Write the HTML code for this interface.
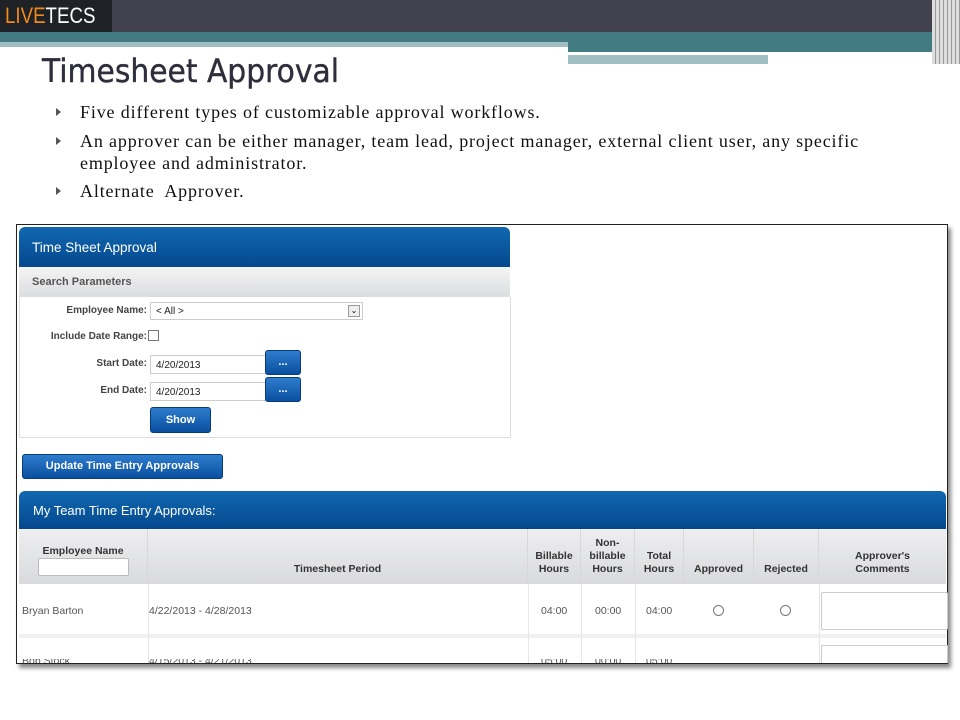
<!DOCTYPE html>
<html><head><meta charset="utf-8"><style>
*{margin:0;padding:0;box-sizing:border-box}
body{width:960px;height:720px;background:#fff;position:relative;overflow:hidden;font-family:"Liberation Sans",sans-serif}
.a{position:absolute}
.bul{font-family:"Liberation Serif",serif;font-size:18px;letter-spacing:0.85px;color:#111;line-height:22px}
.tri{position:absolute;left:56px;width:0;height:0;border-left:5px solid #555;border-top:4px solid transparent;border-bottom:4px solid transparent}
.lab{position:absolute;font-size:10px;font-weight:bold;color:#444;text-align:right}
.inp{position:absolute;border:1px solid #ccc;background:#fff;font-size:10px;color:#222;padding:4px 5px}
.btn{position:absolute;background:linear-gradient(#2e7ccc,#0a4fa0);border:1px solid #073c7c;border-radius:3px;color:#fff;font-size:11px;font-weight:bold;text-align:center}
.th{position:absolute;top:529px;height:55px;font-size:10.5px;font-weight:bold;color:#333;text-align:center;line-height:13px;border-right:1px solid #d8d8d8;display:flex;align-items:flex-end;justify-content:center;padding-bottom:8px}
.td{position:absolute;font-size:10.5px;color:#555}
.rad{position:absolute;width:11px;height:11px;border:1px solid #777;border-radius:50%}
</style></head><body>
<div class="a" style="left:0;top:0;width:960px;height:32px;background:#42424f"></div>
<div class="a" style="left:0;top:0;width:112px;height:32px;background:#1e2226"></div>
<div class="a" style="left:5px;top:3px;font-size:22px;color:#fff;transform:scaleX(0.85);transform-origin:left"><span style="color:#f08a1c">LIVE</span>TECS</div>
<div class="a" style="left:0;top:32px;width:960px;height:15px;background:#427c82"></div>
<div class="a" style="left:0;top:42px;width:568px;height:5px;background:#a0bfc2"></div>
<div class="a" style="left:568px;top:47px;width:392px;height:19px;background:#fff"></div>
<div class="a" style="left:568px;top:42px;width:370px;height:10px;background:#427c82"></div>
<div class="a" style="left:568px;top:55px;width:200px;height:9px;background:#a0bfc2"></div>
<div class="a" style="left:932px;top:0;width:28px;height:64px;background:repeating-linear-gradient(90deg,#ddd 0 3px,#999 3px 4px)"></div>
<div class="a" style="left:42px;top:52px;font-size:32px;color:#2e2e3c;font-family:'DejaVu Sans',sans-serif;transform:scaleX(0.93);transform-origin:left;-webkit-text-stroke:0.4px #2e2e3c">Timesheet Approval</div>
<div class="tri" style="top:108px"></div>
<div class="a bul" style="left:80px;top:101px">Five different types of customizable approval workflows.</div>
<div class="tri" style="top:137px"></div>
<div class="a bul" style="left:80px;top:130px;width:830px">An approver can be either manager, team lead, project manager, external client user, any specific employee and administrator.</div>
<div class="tri" style="top:187px"></div>
<div class="a bul" style="left:80px;top:180px">Alternate&nbsp; Approver.</div>

<div class="a" style="left:16px;top:224px;width:932px;height:440px;border:1px solid #222;box-shadow:3px 4px 4px #888;background:#fff;overflow:hidden"></div>
<div class="a" style="left:19px;top:227px;width:491px;height:40px;background:linear-gradient(#1168b0,#04488e);border-radius:6px 6px 0 0;color:#fff;font-size:13.5px;padding:13px 0 0 13px">Time Sheet Approval</div>
<div class="a" style="left:19px;top:267px;width:491px;height:30px;background:linear-gradient(#f4f4f4,#dcdde0);font-size:11px;font-weight:bold;color:#555;padding:9px 0 0 13px">Search Parameters</div>
<div class="a" style="left:19px;top:297px;width:492px;height:141px;border:1px solid #ddd;border-top:none"></div>
<div class="lab" style="left:40px;width:107px;top:305px">Employee Name:</div>
<div class="inp" style="left:150px;top:302px;width:213px;height:18px;padding-top:3px">&lt; All &gt;</div>
<div class="a" style="left:348px;top:305px;width:12px;height:12px;border:1px solid #999;background:#eee;font-size:8px;text-align:center;line-height:10px">&#8964;</div>
<div class="lab" style="left:30px;width:117px;top:331px">Include Date Range:</div>
<div class="a" style="left:148px;top:330px;width:11px;height:11px;border:1px solid #777"></div>
<div class="lab" style="left:40px;width:107px;top:358px">Start Date:</div>
<div class="inp" style="left:150px;top:355px;width:116px;height:19px">4/20/2013</div>
<div class="btn" style="left:265px;top:350px;width:36px;height:25px;line-height:22px">...</div>
<div class="lab" style="left:40px;width:107px;top:385px">End Date:</div>
<div class="inp" style="left:150px;top:382px;width:116px;height:19px">4/20/2013</div>
<div class="btn" style="left:265px;top:377px;width:36px;height:25px;line-height:22px">...</div>
<div class="btn" style="left:150px;top:407px;width:61px;height:26px;line-height:24px">Show</div>
<div class="btn" style="left:22px;top:454px;width:201px;height:25px;line-height:23px">Update Time Entry Approvals</div>

<div class="a" style="left:19px;top:491px;width:927px;height:38px;background:linear-gradient(#1168b0,#04488e);border-radius:6px 6px 0 0;color:#fff;font-size:13px;padding:12px 0 0 14px">My Team Time Entry Approvals:</div>
<div class="a" style="left:19px;top:529px;width:927px;height:55px;background:linear-gradient(#eeeef0,#d9dadd)"></div>
<div class="th" style="left:19px;width:129px;align-items:flex-start;padding-top:16px">Employee Name</div>
<div class="a" style="left:38px;top:558px;width:91px;height:18px;background:#fff;border:1px solid #bbb;border-radius:2px"></div>
<div class="th" style="left:148px;width:380px">Timesheet Period</div>
<div class="th" style="left:528px;width:53px">Billable<br>Hours</div>
<div class="th" style="left:581px;width:54px">Non-<br>billable<br>Hours</div>
<div class="th" style="left:635px;width:49px">Total<br>Hours</div>
<div class="th" style="left:684px;width:70px">Approved</div>
<div class="th" style="left:754px;width:65px">Rejected</div>
<div class="th" style="left:819px;width:127px;border:none">Approver's<br>Comments</div>
<div class="a" style="left:19px;top:584px;width:927px;height:54px;border-bottom:4px solid #f0f0f0"></div>
<div class="a" style="left:148px;top:584px;width:1px;height:79px;background:#e6e6e6"></div>
<div class="a" style="left:528px;top:584px;width:1px;height:79px;background:#e6e6e6"></div>
<div class="a" style="left:581px;top:584px;width:1px;height:79px;background:#e6e6e6"></div>
<div class="a" style="left:635px;top:584px;width:1px;height:79px;background:#e6e6e6"></div>
<div class="a" style="left:819px;top:584px;width:1px;height:79px;background:#e6e6e6"></div>
<div class="td" style="left:22px;top:605px">Bryan Barton</div>
<div class="td" style="left:149px;top:605px">4/22/2013 - 4/28/2013</div>
<div class="td" style="left:541px;top:605px">04:00</div>
<div class="td" style="left:595px;top:605px">00:00</div>
<div class="td" style="left:646px;top:605px">04:00</div>
<div class="rad" style="left:713px;top:605px"></div>
<div class="rad" style="left:780px;top:605px"></div>
<div class="a" style="left:821px;top:592px;width:127px;height:38px;border:1px solid #ccc;border-radius:2px"></div>
<div class="a" style="left:821px;top:645px;width:127px;height:18px;border:1px solid #ccc;border-bottom:none"></div>
<div class="a" style="left:17px;top:659px;width:930px;height:4px;overflow:hidden">
<div class="td" style="left:5px;top:-4px">Bob Stock</div>
<div class="td" style="left:132px;top:-4px">4/15/2013 - 4/21/2013</div>
<div class="td" style="left:524px;top:-4px">05:00</div>
<div class="td" style="left:578px;top:-4px">00:00</div>
<div class="td" style="left:629px;top:-4px">05:00</div>
</div>
</body></html>
